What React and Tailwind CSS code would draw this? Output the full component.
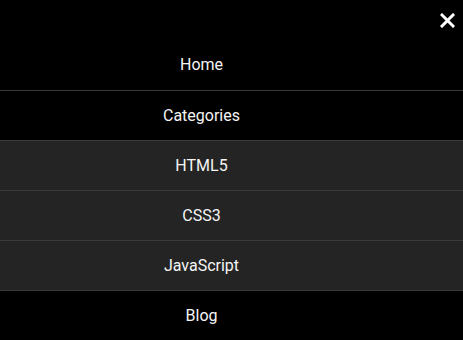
import React from "react";

const items = [
  { label: "Home", sub: false },
  { label: "Categories", sub: false },
  { label: "HTML5", sub: true },
  { label: "CSS3", sub: true },
  { label: "JavaScript", sub: true },
  { label: "Blog", sub: false },
];

export default function App() {
  return (
    <div
      className="w-[463px] h-[340px] bg-black text-white overflow-hidden flex flex-col"
      style={{ fontFamily: "Roboto, 'Liberation Sans', sans-serif" }}
    >
      <div className="h-[40px] flex justify-end items-start pr-[8px] pt-[13px]">
        <svg width="15" height="15" viewBox="0 0 15 15">
          <path d="M2 2 L13 13 M13 2 L2 13" stroke="#fff" strokeWidth="3" strokeLinecap="square" />
        </svg>
      </div>
      <ul className="flex flex-col">
        {items.map((it, i) => (
          <li
            key={it.label}
            className={
              "h-[50px] flex items-center justify-center pr-[60px] text-[16px] text-[#f5f5f5] " +
              (i > 0 ? "border-t border-[#3a3a3a] " : "") +
              (it.sub ? "bg-[#242424]" : "bg-black")
            }
          >
            {it.label}
          </li>
        ))}
      </ul>
    </div>
  );
}
